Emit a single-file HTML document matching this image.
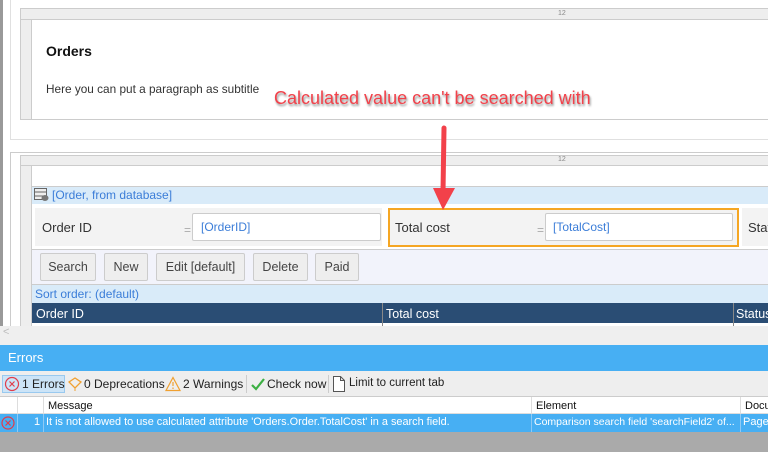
<!DOCTYPE html>
<html><head><style>
*{box-sizing:border-box;margin:0;padding:0}
body{width:768px;height:452px;overflow:hidden;background:#fff;font-family:"Liberation Sans",sans-serif;position:relative;font-size:12px;color:#333}
.a{position:absolute}
.t{white-space:nowrap}
.btn{position:absolute;top:253px;height:28px;border:1px solid #ccc;background:#eee;border-radius:2px;font-size:12.5px;color:#444;text-align:center;line-height:26px}
</style></head><body>
<div class="a" style="left:0;top:0;width:3px;height:330px;background:#999"></div>
<div class="a" style="left:10px;top:-2px;width:770px;height:142px;border:1px solid #e0e0e0"></div>
<div class="a" style="left:20px;top:8px;width:760px;height:112px;border:1px solid #ccc"></div>
<div class="a" style="left:21px;top:9px;width:760px;height:11px;background:#eee;border-bottom:1px solid #ccc"></div>
<div class="a" style="left:21px;top:20px;width:11px;height:99px;background:#eee;border-right:1px solid #ccc"></div>
<div class="a t" style="left:558px;top:10px;font-size:7px;color:#888">12</div>
<div class="a t" style="left:46px;top:43px;font-size:14px;font-weight:bold;color:#111">Orders</div>
<div class="a t" style="left:46px;top:82px;font-size:11.8px;color:#333">Here you can put a paragraph as subtitle</div>
<div class="a t" style="left:274px;top:88px;font-size:18px;color:#f2414a;text-shadow:1px 2px 2px rgba(0,0,0,.45)">Calculated value can't be searched with</div>
<div class="a" style="left:10px;top:152px;width:770px;height:200px;border:1px solid #ccc"></div>
<div class="a" style="left:20px;top:155px;width:760px;height:200px;border:1px solid #ccc"></div>
<div class="a" style="left:21px;top:156px;width:760px;height:10px;background:#eee;border-bottom:1px solid #ccc"></div>
<div class="a" style="left:21px;top:166px;width:11px;height:170px;background:#eee;border-right:1px solid #ccc"></div>
<div class="a t" style="left:558px;top:156px;font-size:7px;color:#888">12</div>
<div class="a" style="left:32px;top:186px;width:740px;height:18px;background:#d9ebf9;border-top:1px solid #ccc"></div>
<svg class="a" style="left:34px;top:188px" width="15" height="14"><rect x="0.5" y="0.5" width="12" height="11" fill="#eee" stroke="#666"/><line x1="1" y1="4" x2="12" y2="4" stroke="#666"/><line x1="1" y1="8" x2="12" y2="8" stroke="#666"/><ellipse cx="11" cy="10" rx="3.5" ry="3" fill="#777"/></svg>
<div class="a t" style="left:52px;top:188px;color:#3b7dd8">[Order, from database]</div>
<div class="a" style="left:32px;top:204px;width:740px;height:45px;background:#fff"></div>
<div class="a" style="left:35px;top:208px;width:347px;height:38px;background:#f3f3f3"></div>
<div class="a t" style="left:42px;top:220px;font-size:13px;color:#333">Order ID</div>
<div class="a t" style="left:184px;top:223px;color:#aaa">=</div>
<div class="a" style="left:192px;top:213px;width:189px;height:28px;background:#fff;border:1px solid #ccc;border-radius:2px"></div>
<div class="a t" style="left:201px;top:220px;color:#3b7dd8">[OrderID]</div>
<div class="a" style="left:388px;top:208px;width:351px;height:39px;background:#f3f3f3;border:2px solid #f5a623"></div>
<div class="a t" style="left:395px;top:220px;font-size:13px;color:#333">Total cost</div>
<div class="a t" style="left:537px;top:223px;color:#aaa">=</div>
<div class="a" style="left:545px;top:213px;width:188px;height:28px;background:#fff;border:1px solid #ccc;border-radius:2px"></div>
<div class="a t" style="left:553px;top:220px;color:#3b7dd8">[TotalCost]</div>
<div class="a" style="left:742px;top:208px;width:30px;height:38px;background:#f3f3f3"></div>
<div class="a t" style="left:748px;top:220px;font-size:13px;color:#333">Status</div>
<div class="a" style="left:32px;top:249px;width:740px;height:36px;background:#f2f3fb;border-top:1px solid #ccc"></div>
<div class="btn" style="left:40px;width:56px">Search</div>
<div class="btn" style="left:104px;width:44px">New</div>
<div class="btn" style="left:156px;width:89px">Edit [default]</div>
<div class="btn" style="left:253px;width:55px">Delete</div>
<div class="btn" style="left:315px;width:44px">Paid</div>
<div class="a" style="left:32px;top:284px;width:740px;height:19px;background:#d9ebf9;border-top:1px solid #ccc"></div>
<div class="a t" style="left:35px;top:287px;color:#3b7dd8">Sort order: (default)</div>
<div class="a" style="left:32px;top:303px;width:740px;height:20px;background:#2a4d74"></div>
<div class="a" style="left:382px;top:303px;width:1px;height:25px;background:#888"></div>
<div class="a" style="left:733px;top:303px;width:1px;height:25px;background:#888"></div>
<div class="a t" style="left:36px;top:307px;font-size:12.5px;color:#fff">Order ID</div>
<div class="a t" style="left:386px;top:307px;font-size:12.5px;color:#fff">Total cost</div>
<div class="a t" style="left:736px;top:307px;font-size:12.5px;color:#fff">Status</div>
<div class="a" style="left:0;top:326px;width:768px;height:19px;background:#efefef"></div>
<div class="a t" style="left:3px;top:326px;font-size:11px;color:#bbb">&lt;</div>
<div class="a" style="left:0;top:345px;width:768px;height:26px;background:#47aff3"></div>
<div class="a t" style="left:8px;top:350px;font-size:13px;color:#fff">Errors</div>
<div class="a" style="left:0;top:371px;width:768px;height:26px;background:#eee;border-bottom:1px solid #ccc"></div>
<div class="a" style="left:2px;top:375px;width:63px;height:18px;background:#cce4f7;border:1px solid #99c9ef"></div>
<svg class="a" style="left:4px;top:376px" width="16" height="16"><circle cx="8" cy="8" r="6.5" fill="none" stroke="#e03c4a" stroke-width="1.2"/><path d="M5.5 5.5l5 5M10.5 5.5l-5 5" stroke="#e03c4a" stroke-width="1.2"/></svg>
<div class="a t" style="left:22px;top:377px;font-size:12px;color:#222">1 Errors</div>
<svg class="a" style="left:67px;top:376px" width="16" height="16"><path d="M2 6l6-4 6 4-6 6z" fill="none" stroke="#f0a030" stroke-width="1.3"/><path d="M8 12v3" stroke="#f0a030"/></svg>
<div class="a t" style="left:84px;top:377px;font-size:12px;color:#222">0 Deprecations</div>
<svg class="a" style="left:165px;top:376px" width="16" height="16"><path d="M8 1.5L15 14.5H1z" fill="none" stroke="#f0a030" stroke-width="1.2"/><path d="M8 6v4M8 11.5v1.5" stroke="#f0a030" stroke-width="1.2"/></svg>
<div class="a t" style="left:183px;top:377px;font-size:12px;color:#222">2 Warnings</div>
<div class="a" style="left:246px;top:375px;width:1px;height:18px;background:#ccc"></div>
<svg class="a" style="left:250px;top:376px" width="16" height="16"><path d="M2 9l4 4 8-10" fill="none" stroke="#3cb043" stroke-width="2.2"/></svg>
<div class="a t" style="left:267px;top:377px;font-size:12px;color:#222">Check now</div>
<div class="a" style="left:328px;top:375px;width:1px;height:18px;background:#ccc"></div>
<svg class="a" style="left:332px;top:375px" width="14" height="18"><path d="M1.5 1.5h7l4 4v11h-11z M8.5 1.5v4h4" fill="#fff" stroke="#555"/></svg>
<div class="a t" style="left:349px;top:377px;font-size:11.5px;color:#222">Limit to current tab</div>
<div class="a" style="left:0;top:397px;width:768px;height:17px;background:#fff;border-bottom:1px solid #ddd"></div>
<div class="a" style="left:17px;top:397px;width:1px;height:35px;background:#ddd"></div>
<div class="a" style="left:43px;top:397px;width:1px;height:35px;background:#ddd"></div>
<div class="a" style="left:531px;top:397px;width:1px;height:35px;background:#ddd"></div>
<div class="a" style="left:740px;top:397px;width:1px;height:35px;background:#ddd"></div>
<div class="a t" style="left:48px;top:400px;font-size:11px;color:#111">Message</div>
<div class="a t" style="left:536px;top:400px;font-size:11px;color:#111">Element</div>
<div class="a t" style="left:745px;top:400px;font-size:11px;color:#111">Document</div>
<div class="a" style="left:0;top:414px;width:768px;height:18px;background:#47aff3"></div>
<div class="a" style="left:17px;top:414px;width:1px;height:18px;background:#8fcaf5"></div>
<div class="a" style="left:43px;top:414px;width:1px;height:18px;background:#8fcaf5"></div>
<div class="a" style="left:531px;top:414px;width:1px;height:18px;background:#8fcaf5"></div>
<div class="a" style="left:740px;top:414px;width:1px;height:18px;background:#8fcaf5"></div>
<svg class="a" style="left:0;top:415px" width="16" height="16"><circle cx="8" cy="8" r="6" fill="none" stroke="#e03c4a" stroke-width="1.2"/><path d="M5.5 5.5l5 5M10.5 5.5l-5 5" stroke="#e03c4a" stroke-width="1.2"/></svg>
<div class="a t" style="left:34px;top:416px;font-size:11px;color:#fff">1</div>
<div class="a t" style="left:46px;top:416px;font-size:10.9px;color:#fff">It is not allowed to use calculated attribute 'Orders.Order.TotalCost' in a search field.</div>
<div class="a t" style="left:534px;top:416px;font-size:10.5px;color:#fff">Comparison search field 'searchField2' of...</div>
<div class="a t" style="left:743px;top:416px;font-size:11px;color:#fff">Page</div>
<div class="a" style="left:0;top:432px;width:768px;height:20px;background:#aaa"></div>
<svg class="a" style="left:425px;top:120px" width="40" height="100"><path d="M19 8L18 72" stroke="#f2414a" stroke-width="5" stroke-linecap="round"/><path d="M8 68L30 68L18 90z" fill="#f2414a"/></svg>
</body></html>
